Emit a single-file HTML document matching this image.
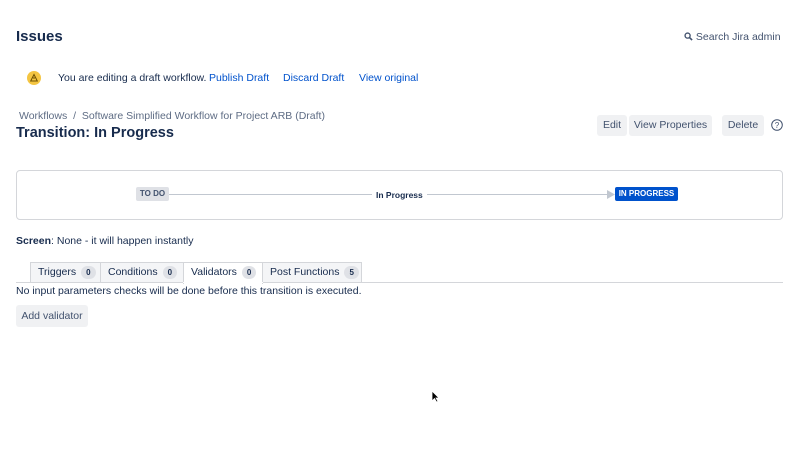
<!DOCTYPE html>
<html><head><style>
*{box-sizing:border-box;margin:0;padding:0}
body{width:800px;height:460px;background:#fff;font-family:"Liberation Sans",sans-serif;color:#172b4d;position:relative;overflow:hidden;font-size:10.5px}
.a{position:absolute;white-space:nowrap}
.link{color:#0052cc}
.btn{position:absolute;background:#f0f1f3;border-radius:3px;color:#42526e;font-size:10.5px;text-align:center;line-height:21px;height:21px;white-space:nowrap}
.tab{position:absolute;top:262px;height:21px;background:#f4f5f7;border:1px solid #d4d6da;border-bottom:none;font-size:10.5px;line-height:19px;padding-left:7px;color:#172b4d;white-space:nowrap}
.cnt{display:inline-block;background:#dfe1e6;border-radius:8px;font-size:8px;font-weight:bold;padding:0 5px;line-height:13px;margin-left:5px}
</style></head><body>
<div class="a" style="left:16px;top:28px;font-size:15px;font-weight:bold">Issues</div>
<div class="a" style="left:684px;top:31px;color:#42526e"><svg width="9" height="9" viewBox="0 0 10 10" style="vertical-align:-1px"><circle cx="4" cy="4" r="2.8" fill="none" stroke="#42526e" stroke-width="1.5"/><path d="M6 6 L9 9" stroke="#42526e" stroke-width="1.8"/></svg> Search Jira admin</div>
<svg class="a" style="left:27px;top:71px" width="14" height="14" viewBox="0 0 14 14"><circle cx="7" cy="7" r="7" fill="#f4c542"/><path d="M7 3.5 L10.3 10 H3.7 Z" fill="none" stroke="#6b4e00" stroke-width="1"/><path d="M7 6 V8" stroke="#6b4e00" stroke-width="1"/></svg>
<div class="a" style="left:58px;top:72px">You are editing a draft workflow.</div>
<div class="a link" style="left:209px;top:72px">Publish Draft</div>
<div class="a link" style="left:283px;top:72px">Discard Draft</div>
<div class="a link" style="left:359px;top:72px">View original</div>
<div class="a" style="left:19px;top:110px;color:#5e6c84">Workflows &nbsp;/ &nbsp;Software Simplified Workflow for Project ARB (Draft)</div>
<div class="a" style="left:16px;top:125px;font-size:14.5px;font-weight:bold">Transition: In Progress</div>
<div class="btn" style="left:597px;top:115px;width:30px">Edit</div>
<div class="btn" style="left:629px;top:115px;width:83px">View Properties</div>
<div class="btn" style="left:722px;top:115px;width:42px">Delete</div>
<svg class="a" style="left:771px;top:119px" width="12" height="12" viewBox="0 0 12 12"><circle cx="6" cy="6" r="5.3" fill="none" stroke="#42526e" stroke-width="1"/><text x="6" y="9" font-size="8" text-anchor="middle" fill="#42526e" font-family="Liberation Sans">?</text></svg>
<div class="a" style="left:16px;top:170px;width:767px;height:50px;border:1px solid #d4d6da;border-radius:4px"></div>
<div class="a" style="left:169px;top:194px;width:441px;height:1px;background:#c1c7d0"></div>
<svg class="a" style="left:607px;top:190px" width="8" height="9"><path d="M0 0 L8 4.5 L0 9Z" fill="#c1c7d0"/></svg>
<div class="a" style="left:136px;top:187px;width:33px;height:14px;background:#dfe1e6;border-radius:2px;font-size:8px;font-weight:bold;color:#42526e;text-align:center;line-height:14px">TO DO</div>
<div class="a" style="left:372px;top:190px;background:#fff;padding:0 4px;font-size:8.5px;font-weight:bold">In Progress</div>
<div class="a" style="left:615px;top:187px;width:63px;height:14px;background:#0052cc;border-radius:2px;font-size:8px;font-weight:bold;color:#fff;text-align:center;line-height:14px">IN PROGRESS</div>
<div class="a" style="left:16px;top:235px"><b>Screen</b>: None - it will happen instantly</div>
<div class="tab" style="left:30px;width:71px">Triggers<span class="cnt">0</span></div>
<div class="tab" style="left:100px;width:84px">Conditions<span class="cnt">0</span></div>
<div class="tab" style="left:183px;width:80px;background:#fff;height:22px">Validators<span class="cnt">0</span></div>
<div class="tab" style="left:262px;width:100px">Post Functions<span class="cnt">5</span></div>
<div class="a" style="left:16px;top:282px;width:767px;height:1px;background:#d4d6da"></div>
<div class="a" style="left:183px;top:282px;width:80px;height:1px;background:#fff"></div>
<div class="a" style="left:16px;top:285px">No input parameters checks will be done before this transition is executed.</div>
<div class="btn" style="left:16px;top:305px;width:72px;height:22px;line-height:22px">Add validator</div>
<svg class="a" style="left:431px;top:390px" width="9" height="13"><path d="M1 1 V11 L3.5 8.5 L5.5 12 L7 11.3 L5 8 H8 Z" fill="#000" stroke="#fff" stroke-width=".8"/></svg>
</body></html>
